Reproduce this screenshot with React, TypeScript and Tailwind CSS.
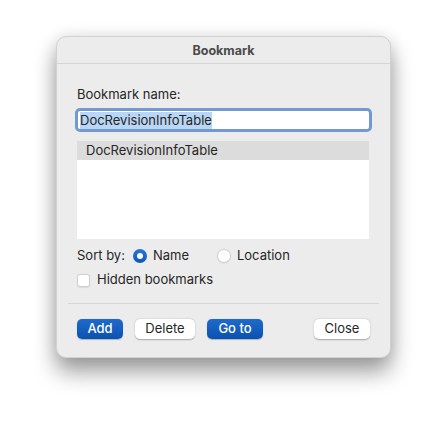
import React from 'react';

const font = {fontFamily: 'Inter, "Liberation Sans", sans-serif'};

const Radio: React.FC<{checked?: boolean; label: string}> = ({checked, label}) => (
  <label className="flex items-center gap-[6px]">
    {checked ? (
      <span className="flex h-[14px] w-[14px] items-center justify-center rounded-full bg-gradient-to-b from-[#2a76d6] to-[#0a58b8]">
        <span className="h-[6px] w-[6px] rounded-full bg-white" />
      </span>
    ) : (
      <span className="h-[14px] w-[14px] rounded-full border border-[#d0d0d0] bg-white shadow-[0_0.5px_1px_rgba(0,0,0,0.1)]" />
    )}
    <span>{label}</span>
  </label>
);

const Button: React.FC<{primary?: boolean; label: string; w: string}> = ({primary, label, w}) => (
  <button
    className={
      primary
        ? `${w} h-[20px] rounded-[5px] bg-gradient-to-b from-[#1e6acb] to-[#0a52b0] text-[13px] font-medium text-white shadow-[0_0.5px_1px_rgba(0,0,0,0.25)]`
        : `${w} h-[20px] rounded-[5px] bg-white text-[13px] text-[#262626] shadow-[0_0.5px_1.5px_rgba(0,0,0,0.3)]`
    }>
    {label}
  </button>
);

export default function App() {
  return (
    <div className="h-[432px] w-[446px] bg-white pl-[56px] pt-[36px]" style={font}>
      <div className="flex h-[322px] w-[335px] flex-col rounded-[10px] border border-[#d2d2d2] bg-[#ececec] shadow-[0_14px_22px_rgba(0,0,0,0.38),0_0_16px_rgba(0,0,0,0.1)]">
        <div className="flex h-[27px] items-center justify-center border-b border-[#d4d4d4] pt-[3px] text-[12.5px] font-bold text-[#4a4a4a]">
          Bookmark
        </div>
        <div className="flex flex-1 flex-col px-[20px] text-[13px] text-[#262626]">
          <div className="mt-[22px] leading-[16px]">Bookmark name:</div>
          <div className="-ml-[2px] mt-[6px] flex h-[24px] w-[297px] items-center rounded-[5px] border-[3px] border-[#729ad0] bg-white pl-[2px]">
            <span className="bg-[#b9d6f5] leading-[17px]">DocRevisionInfoTable</span>
          </div>
          <div className="mt-[9px] h-[98px] w-[292px] bg-white">
            <div className="flex h-[19px] items-center bg-[#dcdcdc] pl-[9px]">DocRevisionInfoTable</div>
          </div>
          <div className="mt-[10px] flex h-[14px] items-center">
            <span className="mr-[8px]">Sort by:</span>
            <Radio checked label="Name" />
            <span className="w-[28px]" />
            <Radio label="Location" />
          </div>
          <label className="mt-[10px] flex h-[14px] items-center gap-[7px]">
            <span className="h-[13px] w-[13px] rounded-[3px] border border-[#cfcfcf] bg-white shadow-[0_0.5px_1px_rgba(0,0,0,0.08)]" />
            Hidden bookmarks
          </label>
          <div className="-mx-[9px] mt-[16px] border-t border-[#d6d6d6]" />
          <div className="mt-[15px] flex items-center">
            <Button primary label="Add" w="w-[46px]" />
            <span className="w-[12px]" />
            <Button label="Delete" w="w-[60px]" />
            <span className="w-[12px]" />
            <Button primary label="Go to" w="w-[56px]" />
            <span className="flex-1" />
            <Button label="Close" w="w-[56px]" />
          </div>
        </div>
      </div>
    </div>
  );
}
